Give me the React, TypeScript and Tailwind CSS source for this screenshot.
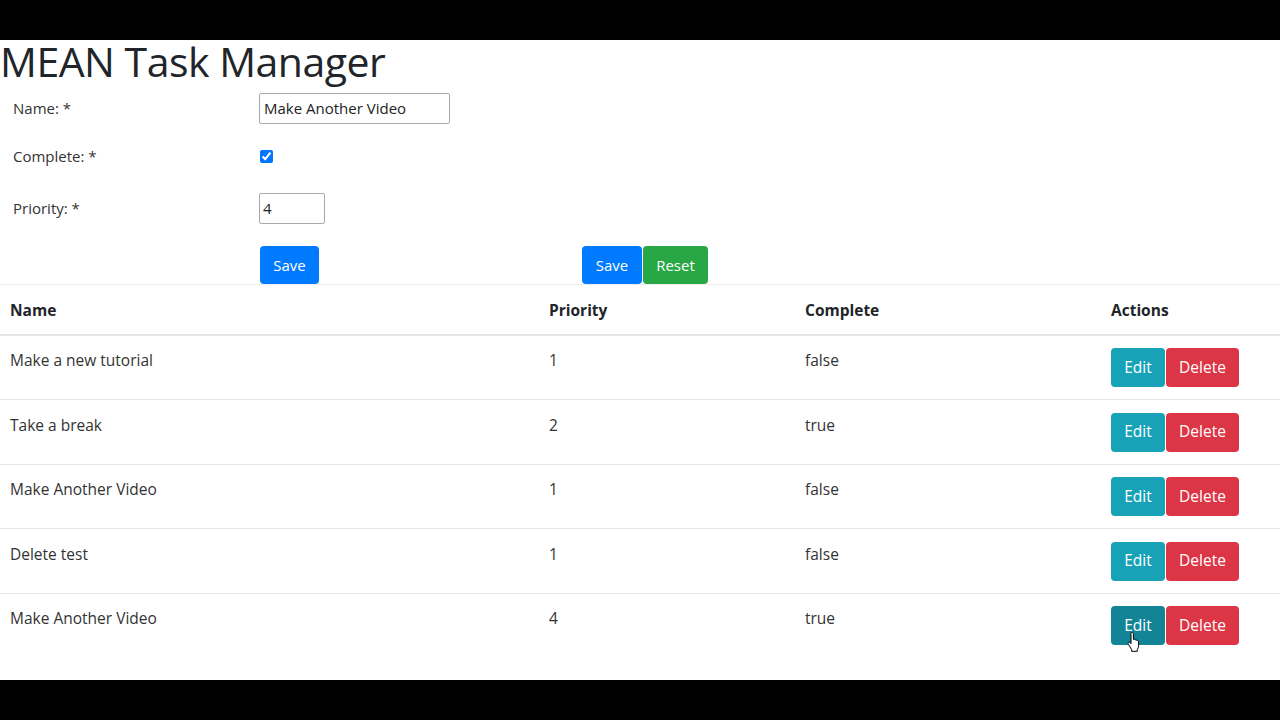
const tasks = [
  { name: 'Make a new tutorial', priority: 1, complete: 'false' },
  { name: 'Take a break', priority: 2, complete: 'true' },
  { name: 'Make Another Video', priority: 1, complete: 'false' },
  { name: 'Delete test', priority: 1, complete: 'false' },
  { name: 'Make Another Video', priority: 4, complete: 'true' },
];

function HandCursor() {
  return (
    <svg width="14" height="20" viewBox="0 0 14 20" className="absolute left-[16px] top-[26px]">
      <path
        d="M4 1.5c0-.8.6-1.3 1.2-1.3s1.2.5 1.2 1.3v6l.3-.1c.7-.3 1.5 0 1.7.6.6-.3 1.4 0 1.6.6.7-.3 1.5.1 1.6.9v4.2c0 1.6-.5 2.8-1.3 3.8v1.8H4.6v-1.8L1.4 12.2c-.5-.6-.4-1.4.2-1.8.5-.4 1.3-.2 1.7.3L4 11.6z"
        fill="#fff"
        stroke="#000"
        strokeWidth="1"
        strokeLinejoin="round"
      />
    </svg>
  );
}

export default function App() {
  return (
    <div
      className="w-[1280px] h-[720px] bg-black flex flex-col overflow-hidden text-[#333]"
      style={{ fontFamily: '"Open Sans", "Noto Sans", sans-serif' }}
    >
      <div className="h-[40px] shrink-0 bg-black"></div>

      <main className="h-[640px] shrink-0 bg-white flex flex-col">
        {/* title */}
        <h1 className="h-[45px] text-[41px] leading-[42px] text-[#212529] tracking-[-0.5px]">
          MEAN Task Manager
        </h1>

        {/* form */}
        <div className="flex flex-col pl-[13px] text-[15px]">
          <div className="h-[46px] flex items-center">
            <label className="w-[246px]">Name: *</label>
            <input
              type="text"
              defaultValue="Make Another Video"
              className="w-[191px] h-[31px] px-[4px] border border-[#a9a9a9] rounded-[2px] text-[15px] text-[#222] outline-none"
            />
          </div>
          <div className="h-[50px] flex items-center">
            <label className="w-[247px]">Complete: *</label>
            <input type="checkbox" defaultChecked className="w-[13px] h-[13px] m-0 accent-[#0075ff]" />
          </div>
          <div className="h-[54px] flex items-center">
            <label className="w-[246px]">Priority: *</label>
            <input
              type="text"
              defaultValue="4"
              className="w-[66px] h-[31px] px-[3px] border border-[#a9a9a9] rounded-[2px] text-[15px] text-[#222] outline-none"
            />
          </div>
          <div className="h-[49px] pt-[11px] flex items-start">
            <button className="ml-[247px] w-[59px] h-[38px] rounded-[4px] bg-[#007bff] text-white text-[15px]">
              Save
            </button>
            <div className="ml-[263px] flex gap-[1px]">
              <button className="w-[60px] h-[38px] rounded-[4px] bg-[#007bff] text-white text-[15px]">Save</button>
              <button className="w-[65px] h-[38px] rounded-[4px] bg-[#28a745] text-white text-[15px]">Reset</button>
            </div>
          </div>
        </div>

        {/* table */}
        <table className="w-[1280px] table-fixed border-collapse text-[15.5px]">
          <colgroup>
            <col className="w-[539px]" />
            <col className="w-[256px]" />
            <col className="w-[306px]" />
            <col />
          </colgroup>
          <thead>
            <tr className="border-t border-[#eeeeee] border-b-2 border-b-[#e6e6e6] text-[#212529]">
              <th className="text-left font-bold pl-[10px] pt-[12.5px] pb-[12px] leading-[24px]">Name</th>
              <th className="text-left font-bold pl-[10px] pt-[12.5px] pb-[12px] leading-[24px]">Priority</th>
              <th className="text-left font-bold pl-[10px] pt-[12.5px] pb-[12px] leading-[24px]">Complete</th>
              <th className="text-left font-bold pl-[10px] pt-[12.5px] pb-[12px] leading-[24px]">Actions</th>
            </tr>
          </thead>
          <tbody>
            {tasks.map((t, i) => (
              <tr key={i} className={i < tasks.length - 1 ? 'border-b border-[#e6e6e6]' : ''}>
                <td className="align-top pl-[10px] pt-[12.5px] leading-[24px]">{t.name}</td>
                <td className="align-top pl-[10px] pt-[12.5px] leading-[24px]">{t.priority}</td>
                <td className="align-top pl-[10px] pt-[12.5px] leading-[24px]">{t.complete}</td>
                <td className="align-top pl-[10px] pt-[12.5px] pb-[12px]">
                  <div className="flex gap-[1px]">
                    <div className="relative">
                      <button
                        className={`w-[54px] h-[39px] rounded-[4px] text-white text-[15.5px] ${
                          i === tasks.length - 1 ? 'bg-[#138496]' : 'bg-[#17a2b8]'
                        }`}
                      >
                        Edit
                      </button>
                      {i === tasks.length - 1 && <HandCursor />}
                    </div>
                    <button className="w-[73px] h-[39px] rounded-[4px] bg-[#dc3545] text-white text-[15.5px]">
                      Delete
                    </button>
                  </div>
                </td>
              </tr>
            ))}
          </tbody>
        </table>
      </main>

      <div className="h-[40px] shrink-0 bg-black"></div>
    </div>
  );
}
